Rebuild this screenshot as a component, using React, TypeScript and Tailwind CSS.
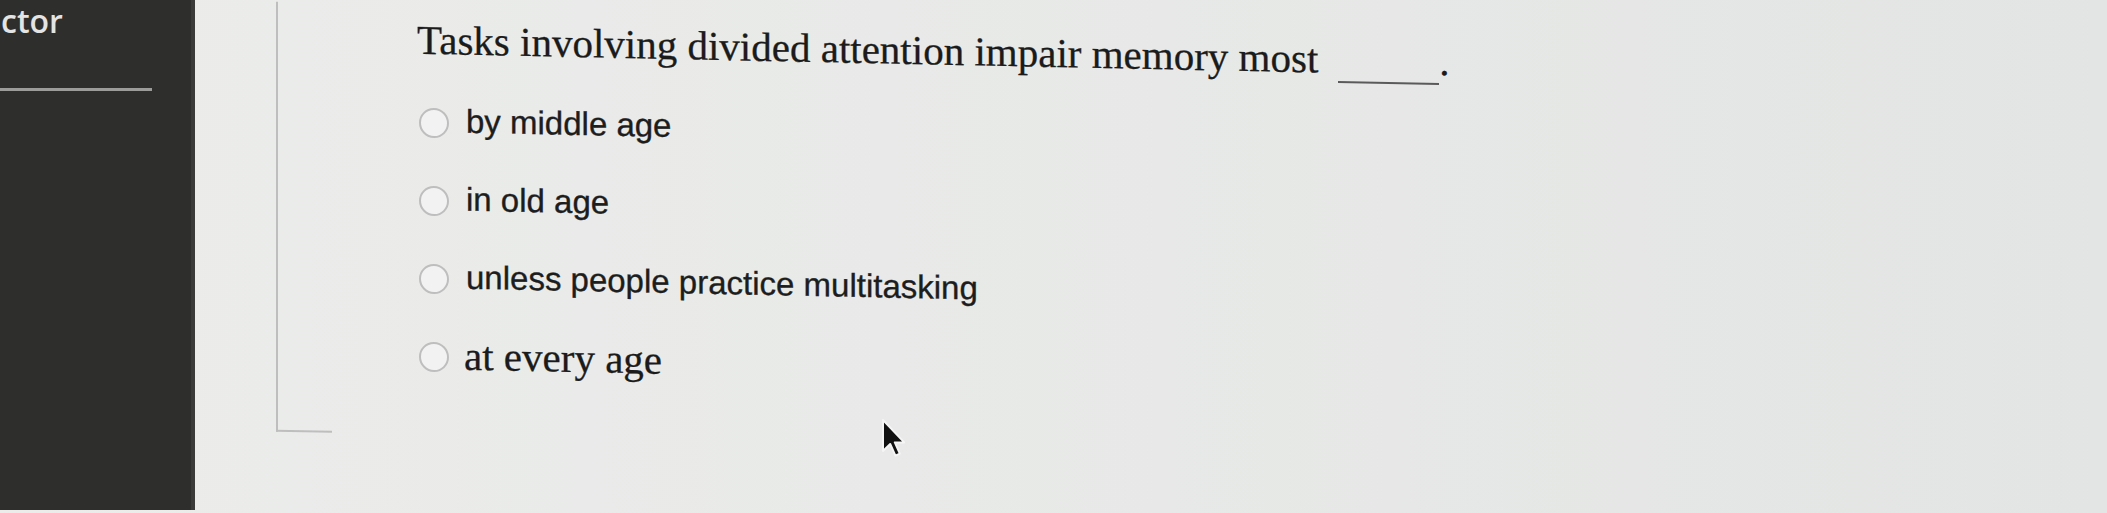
const options = [
  { label: 'by middle age', serif: false },
  { label: 'in old age', serif: false },
  { label: 'unless people practice multitasking', serif: false },
  { label: 'at every age', serif: true },
];

function Radio() {
  return (
    <span className="mt-[4px] h-[30px] w-[30px] shrink-0 rounded-full border-2 border-[#bdbebd] bg-[#f1f2f1]" />
  );
}

function Cursor() {
  return (
    <svg
      className="absolute left-[881px] top-[418px]"
      width="24"
      height="40"
      viewBox="0 0 12 20"
      fill="none"
    >
      <path
        d="M1 1 L1 16.5 L4.6 13 L7.2 18.8 L9.4 17.8 L6.9 12.2 L11.6 12.2 Z"
        fill="#111"
        stroke="#f5f5f5"
        strokeWidth="1"
        strokeLinejoin="round"
      />
    </svg>
  );
}

export default function App() {
  return (
    <div className="relative flex h-[513px] w-full overflow-hidden bg-linear-to-r from-[#ecedeb] to-[#e3e5e4]">
      <aside className="h-[510px] w-[195px] shrink-0 border-r-4 border-[#3b3c3a] bg-[#2e2f2d]">
        <div className="pl-px pt-[5px] font-['Open_Sans',sans-serif] text-[32px] font-semibold leading-[32px] text-[#e4e4e4]">
          ctor
        </div>
        <div className="mt-[51px] h-[3px] w-[152px] bg-[#9c9d9b]" />
      </aside>

      <main className="flex-1">
        {/* slight camera tilt of the photo */}
        <div className="origin-top-left skew-y-[1.2deg]">
          <div className="ml-[81px] flex h-[430px] flex-col border-l-2 border-[#bdbebd]">
            <p className="pl-[139px] pt-[14px] font-['Liberation_Serif','Times_New_Roman',serif] text-[41px] leading-[42px] text-[#1b1b1b] [-webkit-text-stroke:0.3px_#1b1b1b]">
              Tasks involving divided attention impair memory most
              <span className="ml-[20px] inline-block w-[101px] border-b-2 border-[#5a5a5a] align-[-10px]" />.
            </p>

            <ul className="mt-[18px] pl-[141px]">
              {options.map((o) => (
                <li key={o.label} className="flex h-[78px] items-center">
                  <Radio />
                  <span
                    className={
                      o.serif
                        ? "ml-[15px] font-['Liberation_Serif','Times_New_Roman',serif] text-[41px] leading-[40px] text-[#1b1b1b] [-webkit-text-stroke:0.3px_#1b1b1b]"
                        : "ml-[17px] font-['Liberation_Sans',Arial,sans-serif] text-[33px] leading-[40px] text-[#1d1d1d] [-webkit-text-stroke:0.35px_#1d1d1d]"
                    }
                  >
                    {o.label}
                  </span>
                </li>
              ))}
            </ul>

            <div className="-ml-[2px] mt-auto w-[56px] border-b-2 border-[#bdbebd]" />
          </div>
        </div>
      </main>

      <Cursor />
    </div>
  );
}
